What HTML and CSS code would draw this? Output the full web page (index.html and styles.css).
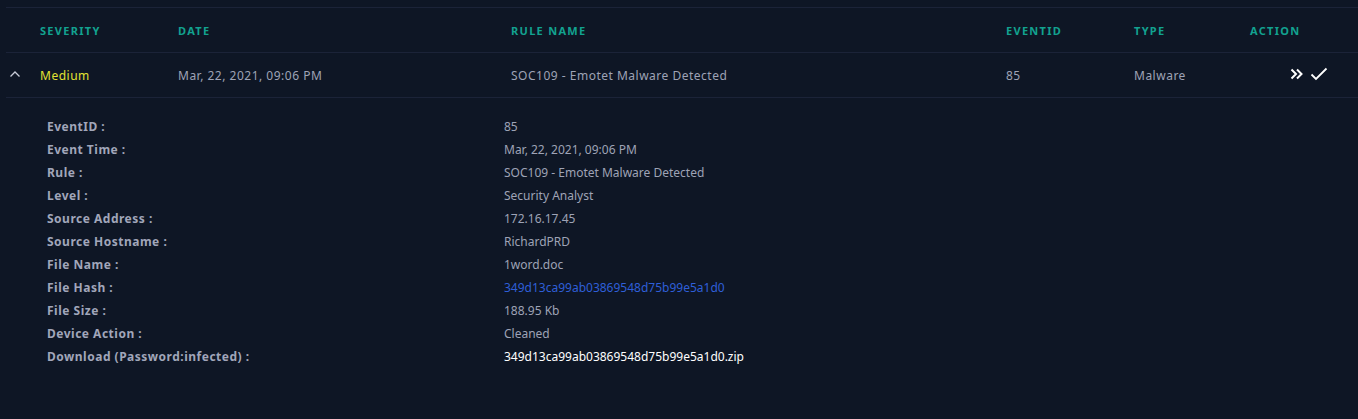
FILE: index.html
```html
<!DOCTYPE html>
<html>
<head>
<meta charset="utf-8">
<link rel="stylesheet" href="styles.css">
</head>
<body>
<div class="table">
  <div class="row head">
    <div class="cell"></div>
    <div class="cell">SEVERITY</div>
    <div class="cell">DATE</div>
    <div class="cell">RULE NAME</div>
    <div class="cell">EVENTID</div>
    <div class="cell">TYPE</div>
    <div class="cell">ACTION</div>
  </div>
  <div class="row body">
    <div class="cell chev">
      <svg width="12" height="8" viewBox="0 0 12 8"><path d="M1.5 6.5 L6 2 L10.5 6.5" fill="none" stroke="#c8ccd8" stroke-width="1.3"/></svg>
    </div>
    <div class="cell sev">Medium</div>
    <div class="cell">Mar, 22, 2021, 09:06 PM</div>
    <div class="cell">SOC109 - Emotet Malware Detected</div>
    <div class="cell">85</div>
    <div class="cell">Malware</div>
    <div class="cell actions">
      <svg width="14" height="12" viewBox="0 0 14 12"><path d="M1.5 1.5 L6 6 L1.5 10.5 M7 1.5 L11.5 6 L7 10.5" fill="none" stroke="#ffffff" stroke-width="2"/></svg>
      <svg width="18" height="14" viewBox="0 0 18 14"><path d="M1.5 7.5 L6 12 L16.5 1.5" fill="none" stroke="#ffffff" stroke-width="1.8"/></svg>
    </div>
  </div>
  <div class="details">
    <div class="lbl">EventID :</div><div class="val">85</div>
    <div class="lbl">Event Time :</div><div class="val">Mar, 22, 2021, 09:06 PM</div>
    <div class="lbl">Rule :</div><div class="val">SOC109 - Emotet Malware Detected</div>
    <div class="lbl">Level :</div><div class="val">Security Analyst</div>
    <div class="lbl">Source Address :</div><div class="val">172.16.17.45</div>
    <div class="lbl">Source Hostname :</div><div class="val">RichardPRD</div>
    <div class="lbl">File Name :</div><div class="val">1word.doc</div>
    <div class="lbl">File Hash :</div><div class="val link">349d13ca99ab03869548d75b99e5a1d0</div>
    <div class="lbl">File Size :</div><div class="val">188.95 Kb</div>
    <div class="lbl">Device Action :</div><div class="val">Cleaned</div>
    <div class="lbl">Download (Password:infected) :</div><div class="val dl">349d13ca99ab03869548d75b99e5a1d0.zip</div>
  </div>
</div>
</body>
</html>
```
FILE: styles.css
```css
html, body {
  margin: 0;
  padding: 0;
  background: #0e1625;
  height: 100%;
}
body {
  font-family: "Noto Sans", "Open Sans", sans-serif;
  color: #9ea3b6;
}
.table {
  margin-left: 6px;
  padding-top: 7px;
}
.row {
  display: grid;
  grid-template-columns: 34px 138px 333px 495px 128px 116px 1fr;
  align-items: center;
  border-top: 1px solid #1b2338;
}
.head {
  height: 44px;
  font-size: 11px;
  font-weight: 700;
  letter-spacing: 1.3px;
  color: #12a290;
}
.body {
  height: 44px;
  font-size: 12px;
  letter-spacing: 0.5px;
  border-bottom: 1px solid #1b2338;
}
.chev {
  display: flex;
  align-items: center;
  padding-left: 3px;
  padding-bottom: 2px;
}
.sev {
  color: #e2e232;
}
.actions {
  display: flex;
  align-items: center;
  gap: 6px;
  padding-left: 40px;
  padding-bottom: 3px;
}
.details {
  display: grid;
  grid-template-columns: 457px 1fr;
  grid-auto-rows: 23px;
  align-items: center;
  padding-left: 41px;
  padding-top: 17px;
  font-size: 12px;
}
.lbl {
  font-weight: 700;
  letter-spacing: 0.5px;
  color: #a1a6ba;
}
.val {
  color: #9ea3b6;
}
.link {
  color: #2e5fd8;
}
.dl {
  color: #ffffff;
}
```
